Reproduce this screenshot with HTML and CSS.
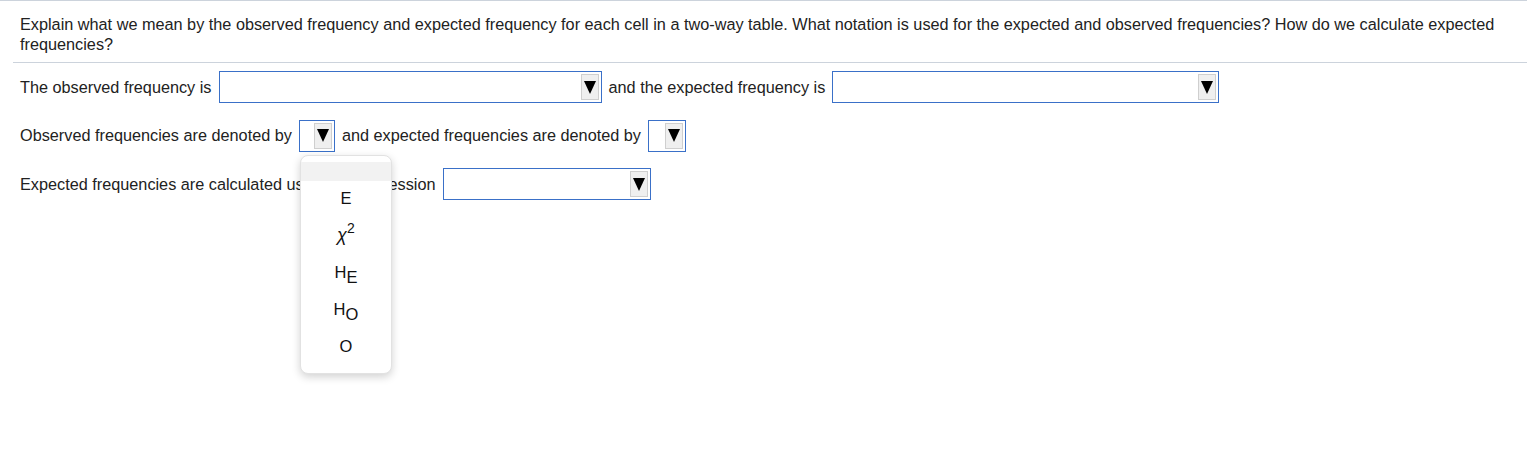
FILE: index.html
```html
<!DOCTYPE html>
<html lang="en">
<head>
  <meta charset="UTF-8">
  <title>Two-way table frequencies</title>
  <link rel="stylesheet" href="styles.css">
</head>
<body>
  <div class="question">
    <p class="prompt">Explain what we mean by the observed frequency and expected frequency for each cell in a two-way table. What notation is used for the expected and observed frequencies? How do we calculate expected frequencies?</p>
  </div>
  <div class="answers">
    <div class="row">
      <span>The observed frequency is</span>
      <div class="select wide">
        <span class="arrow"><svg width="12" height="13" viewBox="0 0 12 13"><polygon points="0,0 12,0 6,13" fill="#000"/></svg></span>
      </div>
      <span>and the expected frequency is</span>
      <div class="select wide2">
        <span class="arrow"><svg width="12" height="13" viewBox="0 0 12 13"><polygon points="0,0 12,0 6,13" fill="#000"/></svg></span>
      </div>
    </div>

    <div class="row">
      <span>Observed frequencies are denoted by</span>
      <div class="select small open">
        <span class="arrow"><svg width="12" height="13" viewBox="0 0 12 13"><polygon points="0,0 12,0 6,13" fill="#000"/></svg></span>
        <ul class="menu">
          <li class="blank"></li>
          <li>E</li>
          <li><i>&chi;</i><sup>2</sup></li>
          <li>H<sub>E</sub></li>
          <li>H<sub>O</sub></li>
          <li>O</li>
        </ul>
      </div>
      <span>and expected frequencies are denoted by</span>
      <div class="select small2">
        <span class="arrow"><svg width="12" height="13" viewBox="0 0 12 13"><polygon points="0,0 12,0 6,13" fill="#000"/></svg></span>
      </div>
    </div>

    <div class="row">
      <span>Expected frequencies are calculated using the expression</span>
      <div class="select mid">
        <span class="arrow"><svg width="12" height="13" viewBox="0 0 12 13"><polygon points="0,0 12,0 6,13" fill="#000"/></svg></span>
      </div>
    </div>
  </div>
</body>
</html>
```

FILE: styles.css
```css
html, body {
  height: 100%;
}

body {
  margin: 0;
  min-height: 452px;
  font-family: "Liberation Sans", Arial, sans-serif;
  font-size: 16.25px;
  color: #222;
  background: #fff;
}

body::before {
  content: "";
  display: block;
  height: 1px;
  background: #ccd3dc;
}

.question {
  margin-left: 13px;
  border-bottom: 1px solid #ccd3dc;
}

.prompt {
  margin: 0;
  padding: 13px 20px 8px 7px;
  line-height: 20px;
}

.answers {
  padding: 8px 20px 0 20px;
}

.row {
  display: flex;
  align-items: center;
  gap: 7px;
  height: 32px;
  margin-bottom: 16.5px;
}

.row:nth-child(2) {
  margin-top: 1px;
}

.select {
  position: relative;
  box-sizing: border-box;
  height: 32px;
  border: 1px solid #3a70c8;
  background: #fff;
}

.wide { width: 383px; }
.wide2 { width: 387px; }
.small { width: 36px; }
.small2 { width: 38px; }
.mid { width: 208px; }

.arrow {
  position: absolute;
  right: 2px;
  top: 2px;
  box-sizing: border-box;
  width: 18px;
  height: 26px;
  background: #efefef;
  border: 1px solid #cfcfcf;
  display: flex;
  align-items: center;
  justify-content: center;
}

.arrow svg {
  display: block;
}

.menu {
  position: absolute;
  top: 34px;
  left: 0;
  z-index: 2;
  width: 92px;
  box-sizing: border-box;
  margin: 0;
  padding: 6px 0 8px;
  list-style: none;
  font-size: 16.5px;
  background: #fff;
  border: 1px solid #e2e2e2;
  border-radius: 8px;
  box-shadow: 0 3px 8px rgba(0, 0, 0, 0.18);
}

.menu li {
  height: 37px;
  line-height: 37px;
  text-align: center;
  color: #111;
}

.menu li.blank {
  height: 19px;
  margin-bottom: -1px;
  background: #f2f2f2;
}

.menu sup,
.menu sub {
  line-height: 0;
}

.menu sup { vertical-align: 8px; font-size: 14px; }
.menu sub { vertical-align: -5px; font-size: 16.5px; }
.menu i { font-size: 18px; }
```
